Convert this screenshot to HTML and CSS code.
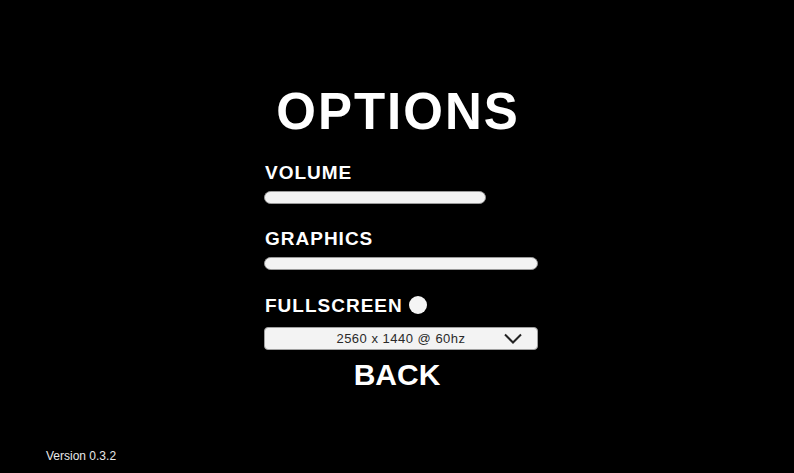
FILE: index.html
```html
<!DOCTYPE html>
<html>
  <head>
    <title>Options</title>
    <link rel="stylesheet" href="styles.css">
  </head>
  <body>
    <div class="menu">
      <h1 class="menu-title">OPTIONS</h1>

      <div class="option-label">VOLUME</div>
      <div class="slider slider-volume"></div>

      <div class="option-label">GRAPHICS</div>
      <div class="slider slider-graphics"></div>

      <div class="option-label fullscreen-row">
        FULLSCREEN
        <span class="toggle"></span>
      </div>
      <div class="dropdown">
        <span class="dropdown-text">2560 x 1440 @ 60hz</span>
        <svg class="dropdown-arrow" width="18" height="11" viewBox="0 0 18 11">
          <polyline points="1,1.5 9,9.5 17,1.5" fill="none" stroke="#222" stroke-width="2"/>
        </svg>
      </div>

      <div class="back-button">BACK</div>
    </div>

    <div class="version">Version 0.3.2</div>
  </body>
</html>
```

FILE: styles.css
```css
body {
  margin: 0px;
  height: 473px;
  background-color: #000000;
  color: #ffffff;
  font-family: 'Liberation Sans', Arial, sans-serif;
  display: flex;
  flex-direction: column;
}
.menu {
  width: 274px;
  margin-left: calc(50% - 133px);
  padding-top: 86px;
  display: flex;
  flex-direction: column;
}
.menu-title {
  margin: 0 0 26px 0;
  font-size: 51px;
  line-height: 51px;
  font-weight: bold;
  letter-spacing: 2px;
  text-align: center;
  margin-left: -8px;
  margin-right: -2px;
}
.option-label {
  font-size: 19px;
  line-height: 19px;
  font-weight: bold;
  letter-spacing: 1px;
  margin-left: 1px;
  margin-bottom: 9px;
}
.slider {
  height: 13px;
  box-sizing: border-box;
  background-color: #f3f3f3;
  border: 1px solid #9a9a9a;
  border-radius: 7px;
  margin-bottom: 25px;
}
.slider-volume {
  width: 222px;
}
.slider-graphics {
  width: 274px;
  margin-bottom: 26px;
}
.fullscreen-row {
  display: flex;
  align-items: center;
  margin-bottom: 12px;
}
.toggle {
  width: 18px;
  height: 18px;
  border-radius: 50%;
  background-color: #f5f5f5;
  margin-left: 6px;
  margin-top: -1px;
}
.dropdown {
  height: 23px;
  box-sizing: border-box;
  background-color: #f3f3f3;
  border: 1px solid #a0a0a0;
  border-radius: 4px;
  display: flex;
  align-items: center;
  margin-bottom: 10px;
}
.dropdown-text {
  flex: 1;
  text-align: center;
  font-size: 13px;
  letter-spacing: 0.5px;
  color: #2a2a2a;
}
/* arrow sits over the right end, so the label stays centred in the box */
.dropdown-arrow {
  margin-right: 15px;
  margin-left: -33px;
}
.back-button {
  font-size: 30px;
  line-height: 30px;
  font-weight: bold;
  text-align: center;
  margin-right: 8px;
  cursor: pointer;
}
.version {
  margin-top: auto;
  padding-left: 46px;
  padding-bottom: 10px;
  font-size: 12px;
  color: #e8e8e8;
}
```
